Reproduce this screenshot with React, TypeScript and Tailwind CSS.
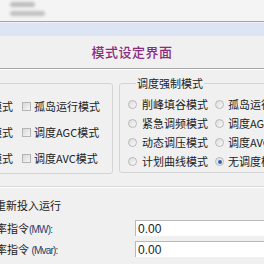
import React from "react";

const CJK = '"Noto Sans CJK SC", "Liberation Sans", sans-serif';

function Radio({ checked = false }: { checked?: boolean }) {
  return (
    <span className="flex h-[9px] w-[9px] shrink-0 items-center justify-center rounded-full border border-[#b8b8b8] bg-gradient-to-br from-[#dcdcdc] to-[#fafafa]">
      {checked && <span className="h-[4px] w-[4px] rounded-full bg-[#2f62b5]" />}
    </span>
  );
}

function Check() {
  return <span className="h-[9px] w-[9px] shrink-0 border border-[#b4b4b4] bg-gradient-to-br from-[#d8d8d8] to-[#f6f6f6]" />;
}

export default function App() {
  const leftRows = [
    ["手动控制模式", "孤岛运行模式"],
    ["自动控制模式", "调度AGC模式"],
    ["计划控制模式", "调度AVC模式"],
  ];
  const rightRows: [string, string, boolean][] = [
    ["削峰填谷模式", "孤岛运行模式", false],
    ["紧急调频模式", "调度AGC模式", false],
    ["动态调压模式", "调度AVC模式", false],
    ["计划曲线模式", "无调度模式", true],
  ];
  return (
    <div
      className="flex h-[264px] w-[264px] flex-col overflow-hidden bg-[#f0f0f0] text-[11px] text-[#222]"
      style={{ fontFamily: CJK }}
    >
      {/* top strip */}
      <div className="flex h-[21px] shrink-0 flex-col gap-[4px] bg-[#f4f4f4] pl-[10px] pt-[2px]">
        <div className="h-[5px] w-[25px] rounded bg-[#bcbcbc] blur-[1.5px]" />
        <div className="h-[5px] w-[35px] rounded bg-[#c0c0c0] blur-[1.5px]" />
      </div>
      <div className="h-px shrink-0 bg-[#a3a3a3]" />
      <div className="h-[13px] shrink-0 border-t border-[#eef2fa] bg-[#dde4f3]" />
      {/* title */}
      <div className="flex h-[33px] shrink-0 items-center justify-center border-t border-[#e4e4e4]">
        <span className="text-[13px] font-medium tracking-[0.5px] text-[#8d2b80]">模式设定界面</span>
      </div>
      <div className="h-px shrink-0 bg-[#a8a8a8]" />
      <div className="h-px shrink-0 bg-white" />

      {/* group boxes */}
      <div className="flex h-[116px] shrink-0 items-start">
        <fieldset className="ml-[-10px] mt-[13px] h-[91px] w-[123px] shrink-0 rounded-[3px] border border-[#d4d4d4] pt-[9px]">
          {leftRows.map(([a, b], i) => (
            <div key={i} className="flex h-[26px] items-center">
              <div className="flex w-[22px] shrink-0 justify-end whitespace-nowrap">{a}</div>
              <div className="ml-[9px] flex items-center gap-[3px] whitespace-nowrap">
                <Check />
                <span>{b}</span>
              </div>
            </div>
          ))}
        </fieldset>
        <fieldset className="ml-[6px] mt-[6px] h-[97px] w-[200px] shrink-0 rounded-[3px] border border-[#d4d4d4] pl-[8px]">
          <legend className="ml-[8px] px-[1px] leading-[14px]">调度强制模式</legend>
          <div className="pt-[5px]">
            {rightRows.map(([a, b, c], i) => (
              <div key={i} className="flex h-[19px] items-center whitespace-nowrap">
                <div className="flex w-[87px] shrink-0 items-center gap-[5px]">
                  <Radio />
                  <span>{a}</span>
                </div>
                <div className="flex items-center gap-[4px]">
                  <Radio checked={c} />
                  <span>{b}</span>
                </div>
              </div>
            ))}
          </div>
        </fieldset>
      </div>

      <div className="h-px shrink-0 bg-[#d8d8d8]" />
      <div className="h-px shrink-0 bg-white" />

      {/* bottom */}
      <div className="flex flex-col">
        <div className="ml-[-5px] mt-[10px] h-[14px] whitespace-nowrap leading-[14px]">重新投入运行</div>
        <div className="mt-[8px] flex h-[16px] items-center">
          <div className="ml-[-37px] w-[172px] shrink-0 whitespace-nowrap">
            有功功率指令
            <span className="text-[10px] tracking-[-0.8px] text-[#26406c]" style={{ fontFamily: '"Liberation Sans", sans-serif' }}>
              (MW):
            </span>
          </div>
          <div className="flex h-[16px] flex-1 items-center border-l border-t border-[#b9b9b9] bg-white pl-[2px] text-[12px]" style={{ fontFamily: '"Liberation Sans", sans-serif' }}>
            0.00
          </div>
        </div>
        <div className="mt-[5px] flex h-[16px] items-center">
          <div className="ml-[-37px] w-[172px] shrink-0 whitespace-nowrap">
            无功功率指令{" "}
            <span className="text-[10px] tracking-[-0.8px] text-[#26406c]" style={{ fontFamily: '"Liberation Sans", sans-serif' }}>
              (Mvar):
            </span>
          </div>
          <div className="flex h-[16px] flex-1 items-center border-l border-t border-[#b9b9b9] bg-white pl-[2px] text-[12px]" style={{ fontFamily: '"Liberation Sans", sans-serif' }}>
            0.00
          </div>
        </div>
      </div>
    </div>
  );
}
